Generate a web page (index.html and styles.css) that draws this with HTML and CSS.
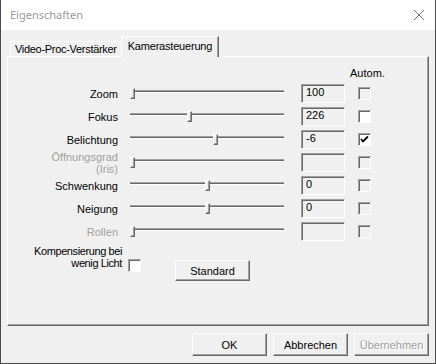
FILE: index.html
```html
<!DOCTYPE html>
<html lang="de">

<head>
    <meta charset="UTF-8">
    <title>Eigenschaften</title>
    <link rel="stylesheet" href="styles.css">
</head>

<body>
    <div class="window">
        <div class="titlebar">
            <span class="title">Eigenschaften</span>
            <svg class="close" width="12" height="12" viewBox="0 0 12 12">
                <path d="M1 1 L11 11 M11 1 L1 11" stroke="#707070" stroke-width="1" fill="none" />
            </svg>
        </div>

        <div class="dialog">
            <div class="tabs">
                <div class="tab">Video-Proc-Verstärker</div>
                <div class="tab active">Kamerasteuerung</div>
            </div>

            <div class="panel">
                <div class="controls">
                    <div class="autom">Autom.</div>

                    <div class="label">Zoom</div>
                    <div class="slider"><div class="track"></div><div class="thumb" style="left: 0px"></div></div>
                    <div class="edit">100</div>
                    <div class="check"></div>

                    <div class="label">Fokus</div>
                    <div class="slider"><div class="track"></div><div class="thumb" style="left: 57px"></div></div>
                    <div class="edit">226</div>
                    <div class="check white"></div>

                    <div class="label">Belichtung</div>
                    <div class="slider"><div class="track"></div><div class="thumb" style="left: 83px"></div></div>
                    <div class="edit">-6</div>
                    <div class="check white">
                        <svg width="11" height="11" viewBox="0 0 11 11">
                            <path d="M2 5 L4 7.5 L9 2.5" stroke="#000" stroke-width="1.8" fill="none" />
                        </svg>
                    </div>

                    <div class="label disabled">Öffnungsgrad<br>(Iris)</div>
                    <div class="slider"><div class="track"></div><div class="thumb" style="left: 0px"></div></div>
                    <div class="edit"></div>
                    <div class="check"></div>

                    <div class="label">Schwenkung</div>
                    <div class="slider"><div class="track"></div><div class="thumb" style="left: 75px"></div></div>
                    <div class="edit">0</div>
                    <div class="check"></div>

                    <div class="label">Neigung</div>
                    <div class="slider"><div class="track"></div><div class="thumb" style="left: 75px"></div></div>
                    <div class="edit">0</div>
                    <div class="check"></div>

                    <div class="label disabled">Rollen</div>
                    <div class="slider"><div class="track"></div><div class="thumb" style="left: 0px"></div></div>
                    <div class="edit"></div>
                    <div class="check"></div>
                </div>

                <div class="lowlight">
                    <div class="lowlight-label">Kompensierung bei<br>wenig Licht</div>
                    <div class="check white lowlight-check"></div>
                    <button class="button standard">Standard</button>
                </div>
            </div>

            <div class="buttons">
                <button class="button">OK</button>
                <button class="button">Abbrechen</button>
                <button class="button disabled">Übernehmen</button>
            </div>
        </div>
    </div>
</body>

</html>
```

FILE: styles.css
```css
* {
    margin: 0;
    padding: 0;
    box-sizing: border-box;
}

body {
    width: 436px;
    height: 364px;
    font-family: "Liberation Sans", Arial, sans-serif;
    font-size: 11px;
    color: #000;
    background: #f0f0f0;
}

.window {
    width: 436px;
    height: 364px;
    border: 1px solid #4a4a4a;
    border-top: none;
    background: #f0f0f0;
}

.titlebar {
    height: 30px;
    background: #fff;
    display: flex;
    align-items: center;
    justify-content: space-between;
    padding: 0 9px 1px 9px;
}

.title {
    font-family: "Noto Sans", "Open Sans", sans-serif;
    font-size: 11px;
    color: #999;
}

.close {
    margin-right: 1px;
}

.dialog {
    padding: 6px 6px 0 6px;
}

.tabs {
    display: flex;
    align-items: flex-end;
    height: 20px;
    padding-left: 3px;
}

.tab {
    height: 15px;
    line-height: 15px;
    padding: 0 4px 0 4px;
    border-left: 1px solid #fff;
    border-top: 1px solid #fff;
    white-space: nowrap;
    letter-spacing: -0.3px;
}

.tab.active {
    position: relative;
    z-index: 1;
    height: 21px;
    line-height: 18px;
    margin-bottom: -1px;
    padding: 0 6px 0 6px;
    background: #f0f0f0;
    border-right: 1px solid #696969;
    box-shadow: inset -1px 0 #a0a0a0;
    letter-spacing: -0.2px;
}

.panel {
    width: 422px;
    height: 270px;
    border-top: 1px solid #fff;
    border-left: 1px solid #fff;
    border-right: 1px solid #696969;
    border-bottom: 1px solid #696969;
    box-shadow: inset -1px -1px #a0a0a0;
}

.controls {
    display: grid;
    grid-template-columns: 122px 171px 57px 13px;
    grid-template-rows: 25px repeat(7, 23px);
}

.autom {
    grid-column: 4;
    align-self: end;
    line-height: 12px;
    margin: 0 0 3px -8px;
    white-space: nowrap;
}

.label {
    grid-column: 1;
    align-self: center;
    text-align: right;
    padding-right: 12px;
    line-height: 12px;
}

.disabled {
    color: #a0a0a0;
}

.slider {
    position: relative;
    width: 154px;
    height: 11px;
    align-self: center;
}

.track {
    margin-top: 2px;
    height: 3px;
    background: #696969;
    border-top: 1px solid #a0a0a0;
    border-bottom: 1px solid #fff;
}

.thumb {
    position: absolute;
    top: 0;
    width: 5px;
    height: 11px;
    background: #f0f0f0;
    border-left: 1px solid #fff;
    border-top: 1px solid #fff;
    border-right: 1px solid #696969;
    border-bottom: 1px solid #696969;
    box-shadow: inset -1px -1px #a0a0a0;
}

.edit {
    width: 44px;
    height: 19px;
    align-self: center;
    line-height: 15px;
    padding-left: 4px;
    border-left: 1px solid #a0a0a0;
    border-top: 1px solid #a0a0a0;
    border-right: 1px solid #fff;
    border-bottom: 1px solid #fff;
    box-shadow: inset 1px 1px #696969;
}

.check {
    width: 13px;
    height: 13px;
    align-self: center;
    background: #f0f0f0;
    border-left: 1px solid #a0a0a0;
    border-top: 1px solid #a0a0a0;
    border-right: 1px solid #fff;
    border-bottom: 1px solid #fff;
    box-shadow: inset 1px 1px #696969;
}

.check.white {
    background: #fff;
}

.check svg {
    display: block;
}

.lowlight {
    display: flex;
    align-items: flex-start;
    margin-top: 2px;
}

.lowlight-label {
    width: 114px;
    text-align: right;
    line-height: 12px;
    letter-spacing: -0.4px;
}

.lowlight-check {
    margin: 4px 0 0 6px;
}

.button {
    width: 75px;
    height: 23px;
    font-family: "Liberation Sans", Arial, sans-serif;
    font-size: 11px;
    color: #000;
    background: #f0f0f0;
    border-left: 1px solid #fff;
    border-top: 1px solid #fff;
    border-right: 1px solid #696969;
    border-bottom: 1px solid #696969;
    box-shadow: inset -1px -1px #a0a0a0;
}

.button.disabled {
    color: #a0a0a0;
    text-shadow: 1px 1px #fff;
}

.standard {
    height: 21px;
    margin: 15px 0 0 34px;
}

.buttons {
    display: flex;
    justify-content: flex-end;
    gap: 6px;
    margin-top: 7px;
}
```
